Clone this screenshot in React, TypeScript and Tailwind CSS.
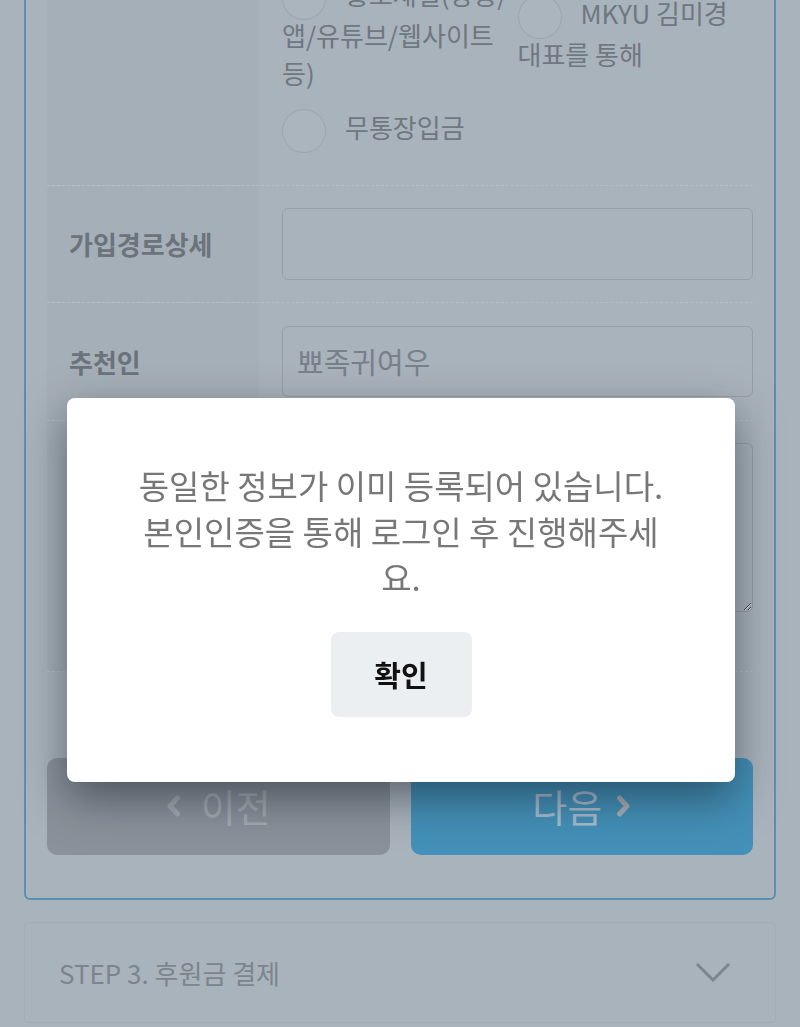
import React from "react";

function Radio({ children }: { children: React.ReactNode }) {
  return (
    <div className="text-[26px] leading-[38px] text-[#6f777f]">
      <span className="inline-block w-[44px] h-[44px] -my-[4px] mr-[19px] rounded-full border border-[#9ba5ae] bg-[#abb5be] align-middle" />
      {children}
    </div>
  );
}

function ChevronLeft() {
  return (
    <svg width="15" height="22" viewBox="0 0 15 22" fill="none">
      <polyline points="11.5,3 4,11 11.5,19" stroke="currentColor" strokeWidth="5" strokeLinejoin="round" strokeLinecap="round" />
    </svg>
  );
}

function ChevronRight() {
  return (
    <svg width="15" height="22" viewBox="0 0 15 22" fill="none">
      <polyline points="3.5,3 11,11 3.5,19" stroke="currentColor" strokeWidth="5" strokeLinejoin="round" strokeLinecap="round" />
    </svg>
  );
}

const labelCell =
  "bg-[#a5afb8] flex pl-[22px] text-[26px] font-bold text-[#6b737b]";

export default function App() {
  return (
    <div className="relative h-screen overflow-hidden bg-[#a9b3bc] px-[24px] font-['Noto_Sans_CJK_KR','Noto_Sans',sans-serif]">
      {/* STEP 2 panel (scrolled so its top is above the viewport) */}
      <div className="-mt-[60px] rounded-[6px] border-2 border-[#5a91b3] px-[21px] pb-[43px]">
        {/* Row: 가입경로 (radio options) */}
        <div className="grid grid-cols-[212px_1fr] border-b border-dashed border-[#b5bec6]">
          <div className={`${labelCell} items-start pt-[6px]`}>가입경로</div>
          <div className="pl-[23px] pt-[33px] pb-[36px]">
            <div className="grid grid-cols-2 items-center">
              <Radio>
                홍보채널(방송/
                <br />
                앱/유튜브/웹사이트
                <br />
                등)
              </Radio>
              <Radio>
                MKYU 김미경
                <br />
                대표를 통해
              </Radio>
            </div>
            <div className="mt-[16px]">
              <Radio>무통장입금</Radio>
            </div>
          </div>
        </div>

        {/* Row: 가입경로상세 */}
        <div className="grid grid-cols-[212px_1fr] border-b border-dashed border-[#b5bec6]">
          <div className={`${labelCell} items-center`}>가입경로상세</div>
          <div className="pl-[23px] py-[22px]">
            <input
              readOnly
              className="block h-[72px] w-full rounded-[6px] border border-[#969fa8] bg-transparent px-[15px] text-[29px] text-[#78808a] outline-none"
            />
          </div>
        </div>

        {/* Row: 추천인 */}
        <div className="grid grid-cols-[212px_1fr] border-b border-dashed border-[#b5bec6]">
          <div className={`${labelCell} items-center`}>추천인</div>
          <div className="pl-[23px] py-[23px]">
            <input
              readOnly
              defaultValue="뾰족귀여우"
              className="block h-[71px] w-full rounded-[6px] border border-[#969fa8] bg-transparent px-[14px] text-[29px] text-[#78808a] outline-none"
            />
          </div>
        </div>

        {/* Row: message */}
        <div className="grid grid-cols-[212px_1fr] border-b border-dashed border-[#b5bec6]">
          <div className={`${labelCell} items-center`}>남기실 말씀</div>
          <div className="pl-[23px] pt-[22px] pb-[59px]">
            <textarea
              readOnly
              className="block h-[169px] w-full rounded-[6px] border border-[#969fa8] bg-transparent outline-none"
            />
          </div>
        </div>

        {/* Buttons */}
        <div className="mt-[86px] grid grid-cols-2 gap-[21px]">
          <button className="flex h-[97px] items-center justify-center gap-[20px] rounded-[10px] bg-[#89929a] text-[38px] text-[#a3abb2]">
            <ChevronLeft />
            <span className="leading-none">이전</span>
          </button>
          <button className="flex h-[97px] items-center justify-center gap-[14px] rounded-[10px] bg-[#4490b8] text-[38px] text-[#a8bccb]">
            <span className="leading-none">다음</span>
            <span className="text-[#a9b0b6]">
              <ChevronRight />
            </span>
          </button>
        </div>
      </div>

      {/* STEP 3 collapsed card */}
      <div className="mt-[22px] flex h-[101px] items-center justify-between rounded-[4px] border border-[#a2acb5] pl-[34px] pr-[44px]">
        <span className="text-[26px] text-[#7c858d]">STEP 3. 후원금 결제</span>
        <svg width="36" height="20" viewBox="0 0 36 20" fill="none">
          <polyline points="2,2 18,18 34,2" stroke="#7d868e" strokeWidth="3" />
        </svg>
      </div>

      {/* Alert dialog */}
      <div className="fixed inset-0">
        <div className="absolute left-[67px] top-[398px] flex h-[384px] w-[668px] flex-col items-center rounded-[8px] bg-white pt-[64px] shadow-[0_16px_44px_rgba(15,25,35,0.5)]">
          <p className="text-center text-[33px] leading-[46px] text-[#777777]">
            동일한 정보가 이미 등록되어 있습니다.
            <br />
            본인인증을 통해 로그인 후 진행해주세
            <br />
            요.
          </p>
          <button className="mt-[32px] h-[85px] w-[141px] rounded-[8px] bg-[#eceff1] text-[29px] font-bold text-[#111111]">
            확인
          </button>
        </div>
      </div>
    </div>
  );
}
